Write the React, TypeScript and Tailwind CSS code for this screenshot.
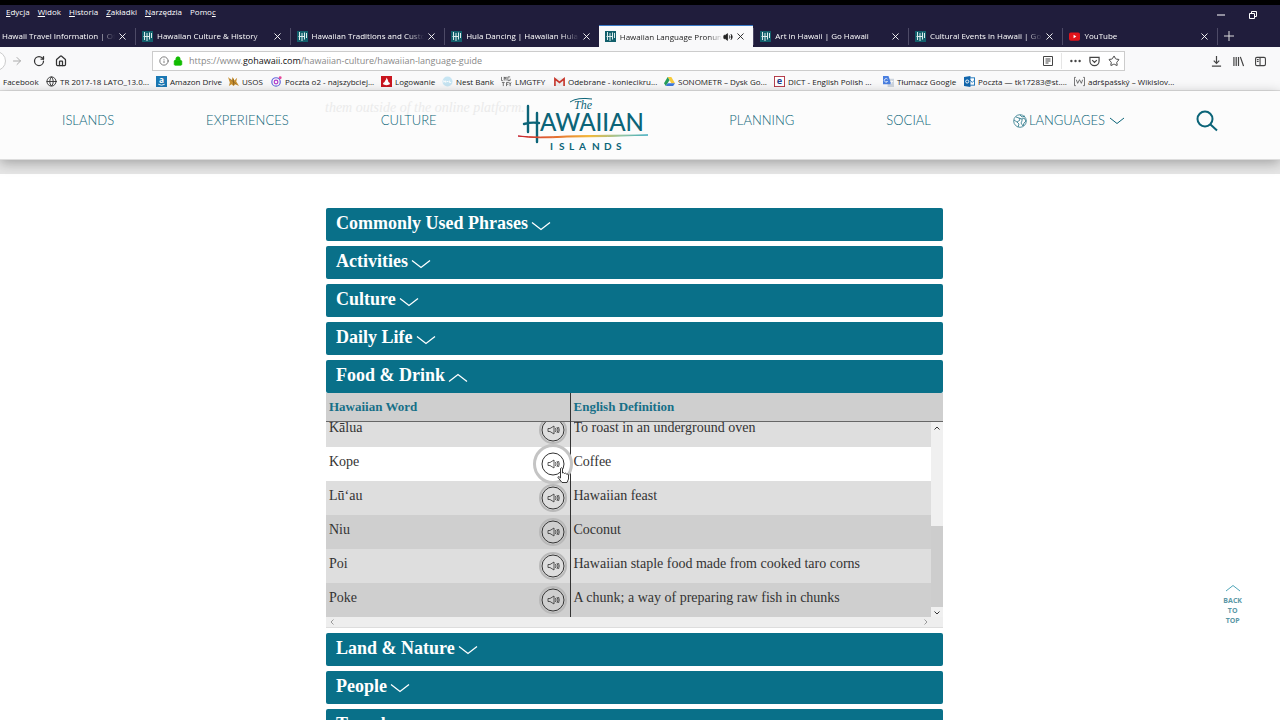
import type { ReactNode } from 'react'
import { ArrowRight, Globe, House, Info, Lock, RotateCw, Star, Volume2, X } from 'lucide-react'

interface Tab {
  title: string
  active?: boolean
  youtube?: boolean
}

interface Bookmark {
  label: string
  width: string
  icon?: ReactNode
}

interface Word {
  word: string
  definition: string
  hovered?: boolean
  cut?: boolean
}

const MENU = ['Edycja', 'Widok', 'Historia', 'Zakładki', 'Narzędzia']

const TABS: Tab[] = [
  { title: 'Hawaiian Culture & History' },
  { title: 'Hawaiian Traditions and Custo' },
  { title: 'Hula Dancing | Hawaiian Hula |' },
  { title: 'Hawaiian Language Pronun', active: true },
  { title: 'Art in Hawaii | Go Hawaii' },
  { title: 'Cultural Events in Hawaii | Go H' },
  { title: 'YouTube', youtube: true },
]

const svg = (children: ReactNode) => (
  <svg viewBox="0 0 12 12" className="size-[11px] shrink-0" aria-hidden="true">
    {children}
  </svg>
)

const BOOKMARKS: Bookmark[] = [
  { label: 'Facebook', width: 'w-[43px]' },
  { label: 'TR 2017-18 LATO_13.0...', width: 'w-[110px]', icon: <Globe className="size-[11px] shrink-0 text-[#333]" /> },
  {
    label: 'Amazon Drive',
    width: 'w-[72px]',
    icon: svg(
      <>
        <rect width="12" height="12" fill="#1a78b4" />
        <text x="6" y="8" fontSize="9" fontWeight="700" textAnchor="middle" fill="#fff">a</text>
        <path d="M2.5 9Q6 11 9.5 9" stroke="#fff" fill="none" />
      </>,
    ),
  },
  {
    label: 'USOS',
    width: 'w-[43px]',
    icon: svg(
      <>
        <path d="M0 1l4 4 1-4 2 4 3-3-1 4 3 5-4-2-2 2-2-2-3 2 1-4z" fill="#c98f2e" />
        <path d="M2 3l7 6M6 3v7" stroke="#7d5a22" strokeWidth=".7" />
      </>,
    ),
  },
  {
    label: 'Poczta o2 - najszybciej...',
    width: 'w-[110px]',
    icon: svg(
      <>
        <circle cx="5.5" cy="6.5" r="4.6" fill="none" stroke="#6667dd" strokeWidth="1.3" />
        <circle cx="5.5" cy="6.5" r="2" fill="none" stroke="#b33ccd" strokeWidth="1.3" />
        <circle cx="10" cy="2" r="1.6" fill="#e6469b" />
      </>,
    ),
  },
  {
    label: 'Logowanie',
    width: 'w-[61px]',
    icon: svg(
      <>
        <rect width="12" height="12" fill="#c9151e" />
        <path d="M6 1.5C7.5 4 8 5 8 6.5c3 1 2 3.500-2 3.500S1 7.500 4 6.500C4 5 6 4 6 1.500z" fill="#fff" />
      </>,
    ),
  },
  {
    label: 'Nest Bank',
    width: 'w-[59px]',
    icon: svg(
      <>
        <circle cx="6" cy="6" r="5.500" fill="#c7e5f3" />
        <path d="M2 7V5l2 2V5M5 6h2M8 5v2h2" stroke="#fff" fill="none" />
      </>,
    ),
  },
  {
    label: 'LMGTFY',
    width: 'w-[53px]',
    icon: svg(<path d="M.5 1v4h1.500M3.500 5V1l1 2 1-2v4M10 1H7.500v4H10V3M1 7h3M2.500 7v4M8.500 7H6v4M6 9h2M9 7l1 2 1-2M10 9v2" stroke="#666" fill="none" />),
  },
  {
    label: 'Odebrane - koniecikru...',
    width: 'w-[110px]',
    icon: svg(
      <>
        <rect y="2" width="12" height="9" fill="#eee" />
        <path d="M1 11V3l5 4 5-4v8" stroke="#c8372d" strokeWidth="1.800" fill="none" />
      </>,
    ),
  },
  {
    label: 'SONOMETR – Dysk Go...',
    width: 'w-[110px]',
    icon: svg(
      <>
        <path d="M4 1h4l4 7H8z" fill="#f7cb3b" />
        <path d="M4 1l2 3.500L2 11 0 8z" fill="#269e5b" />
        <path d="M4 8h8l-2 3H2z" fill="#3f79dc" />
      </>,
    ),
  },
  {
    label: 'DICT - English Polish ...',
    width: 'w-[109px]',
    icon: svg(
      <>
        <rect x=".5" y=".5" width="11" height="11" fill="#fff" stroke="#b03040" />
        <text x="6" y="9" fontSize="10" fontWeight="700" textAnchor="middle" fill="#1e3f8f">e</text>
      </>,
    ),
  },
  {
    label: 'Tłumacz Google',
    width: 'w-[81px]',
    icon: svg(
      <>
        <rect x="5" y="3" width="7" height="9" fill="#cfd6df" />
        <path d="M0 0h6l3 9H0z" fill="#4a7fe0" />
        <path d="M5 3.500A2 2 0 1 0 5 6H3.500M8 6h3M9.500 5v1l-1 3" stroke="#fff" strokeWidth=".8" fill="none" />
      </>,
    ),
  },
  {
    label: 'Poczta — tk17283@st....',
    width: 'w-[110px]',
    icon: svg(
      <>
        <rect x="6" y="2" width="5.500" height="8" fill="#fff" stroke="#1873b9" />
        <path d="M6 4l3 3 3-3" stroke="#1873b9" fill="none" />
        <path d="M0 1l7-1v12l-7-1z" fill="#1266ad" />
        <circle cx="3.500" cy="6" r="1.700" fill="none" stroke="#fff" />
      </>,
    ),
  },
  {
    label: 'adršpašský – Wikislov...',
    width: 'w-[110px]',
    icon: svg(
      <path d="M2 1.500H.5v9H2M10 1.500h1.500v9H10M2.500 4l1.500 4 2-4 2 4 1.500-4" stroke="#444" strokeWidth=".8" fill="none" />,
    ),
  },
]

const WORDS: Word[] = [
  { word: 'Kālua', definition: 'To roast in an underground oven', cut: true },
  { word: 'Kope', definition: 'Coffee', hovered: true },
  { word: 'Lūʻau', definition: 'Hawaiian feast' },
  { word: 'Niu', definition: 'Coconut' },
  { word: 'Poi', definition: 'Hawaiian staple food made from cooked taro corns' },
  { word: 'Poke', definition: 'A chunk; a way of preparing raw fish in chunks' },
]

function SiteIcon() {
  return (
    <svg viewBox="0 0 11 11" className="size-[11px] shrink-0" aria-hidden="true">
      <rect width="11" height="11" fill="#125f6b" />
      <path d="M2.500 1v8M5 2v8M1.500 5.500h6M7.500 1.500v7M9.500 2v5" stroke="#dcecec" fill="none" />
    </svg>
  )
}

function BrowserTab({ title, active, youtube }: Tab) {
  return (
    <div
      className={
        active
          ? 'flex min-w-0 flex-1 items-center border-t border-[#3a7bc8] bg-[#f9f9fa] pr-[7px] pl-[6px] text-[#222]'
          : 'flex min-w-0 flex-1 items-center pr-[7px] pl-[6px] text-white'
      }
    >
      {!active && <span className="mr-[6px] -ml-[6px] h-[17px] w-px bg-[#4d4a66]" />}
      {youtube ? (
        <svg viewBox="0 0 12 9" className="h-[9px] w-[11px] shrink-0" aria-hidden="true">
          <rect width="12" height="9" rx="2" fill="#e2131a" />
          <path d="M5 2.500v4l3-2z" fill="#fff" />
        </svg>
      ) : (
        <SiteIcon />
      )}
      <button className="ml-1 min-w-0 flex-1 overflow-hidden mask-r-from-85% text-left whitespace-nowrap">{title}</button>
      {active && <Volume2 className="size-[10px] shrink-0 fill-current" />}
      <button aria-label="Close tab" className="ml-[2px] shrink-0">
        <X className="size-[11px]" />
      </button>
    </div>
  )
}

function Browser() {
  return (
    <div className="font-['Open_Sans','Noto_Sans',sans-serif] text-[8px]">
      <div className="border-t-[5px] border-black bg-[#201d3c] text-white">
        <div className="flex h-5 items-start justify-between pr-[23px] pl-[6px]">
          <div className="flex gap-[8px] leading-[14px]">
            {MENU.map((m) => (
              <button key={m}>
                <u>{m[0]}</u>
                {m.slice(1)}
              </button>
            ))}
            <button>
              Pomo<u>c</u>
            </button>
          </div>
          <div className="flex gap-6 pt-[6px]">
            <button aria-label="Minimize">
              <svg viewBox="0 0 8 8" className="size-2"><path d="M0 4h8" stroke="#fff" /></svg>
            </button>
            <button aria-label="Restore">
              <svg viewBox="0 0 8 8" className="size-2"><path d="M.5 2.500h5v5h-5zM2.500 2V.5h5v5H6" stroke="#fff" fill="none" /></svg>
            </button>
          </div>
        </div>
        <div className="flex h-[22px]">
          <div className="flex w-[135px] shrink-0 items-center pr-[7px] pl-[2px]">
            <button className="min-w-0 flex-1 overflow-hidden mask-r-from-85% text-left whitespace-nowrap">
              Hawaii Travel Information | Off
            </button>
            <button aria-label="Close tab" className="ml-[2px]">
              <X className="size-[11px]" />
            </button>
          </div>
          {TABS.map((t) => (
            <BrowserTab key={t.title} {...t} />
          ))}
          <div className="flex w-[63px] shrink-0 items-center">
            <span className="mr-[6px] h-[17px] w-px bg-[#4d4a66]" />
            <button aria-label="New tab">
              <svg viewBox="0 0 10 10" className="size-[10px]"><path d="M5 0v10M0 5h10" stroke="#ddd" /></svg>
            </button>
          </div>
        </div>
      </div>

      <div className="flex h-7 items-center bg-[#f9f9fa] pr-[14px] text-[#444]">
        <div className="-ml-[14px] size-5 shrink-0 rounded-full border border-[#ccc] bg-white" />
        <div className="flex w-[146px] shrink-0 items-center gap-[10px] pl-[5px]">
          <button aria-label="Forward"><ArrowRight className="size-3 text-[#aaa]" /></button>
          <button aria-label="Reload"><RotateCw className="size-3 stroke-[2.5] text-[#333]" /></button>
          <button aria-label="Home"><House className="size-3 stroke-[2.5] text-[#333]" /></button>
        </div>
        <div className="flex h-5 flex-1 items-center border border-[#ccc] bg-white pr-1 pl-[6px]">
          <Info className="size-[10px] text-[#666]" />
          <Lock className="mx-1 size-[10px] fill-[#12bc00] text-[#12bc00]" />
          <div className="flex-1 pl-[2px] text-[9px] text-[#888]" role="textbox" aria-label="Address">
            https://www.<span className="text-[#111]">gohawaii.com</span>/hawaiian-culture/hawaiian-language-guide
          </div>
          <button aria-label="Reader view">
            <svg viewBox="0 0 10 10" className="size-[10px]"><path d="M.5.500h9v9h-9zM2.500 3h5M2.500 5h5M2.500 7h3" stroke="#444" fill="none" /></svg>
          </button>
          <span className="mx-2 h-4 w-px bg-[#e5e5e5]" />
          <div className="flex items-center gap-2">
            <button aria-label="Page actions">
              <svg viewBox="0 0 12 12" className="h-3 w-[11px]" fill="#444"><circle cx="1.500" cy="6" r="1.300" /><circle cx="6" cy="6" r="1.300" /><circle cx="10.500" cy="6" r="1.300" /></svg>
            </button>
            <button aria-label="Pocket">
              <svg viewBox="0 0 12 12" className="size-[11px]" fill="none" stroke="#444" strokeWidth="1.300"><path d="M1 1.500h10v4a5 5 0 0 1-10 0zM3.500 4.500L6 7l2.500-2.500" /></svg>
            </button>
            <button aria-label="Bookmark"><Star className="size-3" /></button>
          </div>
        </div>
        <div className="flex gap-[11px] pl-[86px]">
          <button aria-label="Downloads">
            <svg viewBox="0 0 12 12" className="size-[11px]" fill="none" stroke="#444" strokeWidth="1.300"><path d="M6 0v8M3 5l3 3 3-3M1 11h10" /></svg>
          </button>
          <button aria-label="Library">
            <svg viewBox="0 0 12 12" className="size-[11px]" fill="none" stroke="#444" strokeWidth="1.300"><path d="M1 1v10M3.500 1v10M6 1v10M8 1l3.500 10" /></svg>
          </button>
          <button aria-label="Sidebar">
            <svg viewBox="0 0 12 12" className="size-[11px]" fill="none" stroke="#444" strokeWidth="1.200"><rect x=".6" y="1.500" width="10.800" height="9" rx="1.500" /><path d="M5.500 1.500v9M2 4h2M2 6h2" /></svg>
          </button>
        </div>
      </div>

      <div className="flex h-4 items-center overflow-hidden border-b border-[#e0e0e0] bg-[#f9f9fa] pb-[2px] pl-[3px] text-[#222]">
        {BOOKMARKS.map((b) => (
          <a key={b.label} href="#" className={`flex shrink-0 items-center gap-[3px] whitespace-nowrap ${b.width}`}>
            {b.icon}
            {b.label}
          </a>
        ))}
      </div>
    </div>
  )
}

function Logo() {
  return (
    <svg viewBox="0 0 132 56" className="h-14 w-[132px]" fill="#0b6478" role="img" aria-label="The Hawaiian Islands">
      <defs>
        <linearGradient id="swoosh">
          <stop offset="0" stopColor="#c4202e" />
          <stop offset=".25" stopColor="#e2622b" />
          <stop offset=".55" stopColor="#f2b632" />
          <stop offset=".8" stopColor="#8fc3a0" />
          <stop offset="1" stopColor="#3aa9bd" />
        </linearGradient>
      </defs>
      <text x="57" y="12" fontSize="12" fontStyle="italic" fontFamily="Liberation Serif, serif">The</text>
      <path d="M53 5Q60 0 75 2" stroke="#0b6478" fill="none" />
      <path d="M11 9v26M20 16v29M7 27q7-2 15-1" stroke="#0b6478" strokeWidth="2.400" strokeLinecap="round" fill="none" />
      <text x="23" y="34" fontSize="24" fontWeight="500" fontFamily="Lato, sans-serif">AWAIIAN</text>
      <path
        d="M1 39q20 2 49 0q42-1 81-1q-40 2-81 2q-30 2-49-1z"
        fill="url(#swoosh)"
        stroke="url(#swoosh)"
      />
      <text x="33 42 52 62 75 87 99" y="53" fontSize="10" fontWeight="700" fontFamily="Lato, sans-serif">ISLANDS</text>
    </svg>
  )
}

function Chevron({ up }: { up?: boolean }) {
  return (
    <svg viewBox="0 0 20 10" className="mt-1 h-[10px] w-5" fill="none" stroke="currentColor" strokeWidth="1.300" aria-hidden="true">
      <path d={up ? 'M1 8.500l9-7 9 7' : 'M1 1.500l9 7 9-7'} />
    </svg>
  )
}

function SiteHeader() {
  return (
    <header className="relative flex h-[69px] items-center justify-between border-b border-[#ddd] bg-[#fcfcfc] px-[62px] pb-2 font-['Lato',sans-serif] text-[13px] font-light text-[#0b6478] shadow-[0_3px_12px_rgba(0,0,0,0.3)]">
      <p className="absolute top-[6px] left-[325px] font-['Liberation_Serif',serif] text-[14px] font-normal text-[#ebebeb] italic">
        them outside of the online platform.
      </p>
      <nav className="relative flex gap-[92px]">
        <a href="#">ISLANDS</a>
        <a href="#">EXPERIENCES</a>
        <a href="#">CULTURE</a>
      </nav>
      <a href="#" className="relative mt-2">
        <Logo />
      </a>
      <nav className="flex items-center">
        <a href="#">PLANNING</a>
        <a href="#" className="ml-[92px]">SOCIAL</a>
        <button className="ml-[82px] flex items-center">
          <svg viewBox="0 0 14 14" className="mr-[2px] size-[14px]" fill="none" stroke="currentColor" strokeWidth=".7" aria-hidden="true">
            <circle cx="7" cy="7" r="6.300" />
            <path d="M3 3l3 1 1 2-3 2-3-2M4 8l2 2-1 3M7 1l2 2 3-1M9 5l2-1 2 3-2 2-1 3-2-3 1-2zM6 4l3 1" />
          </svg>
          LANGUAGES
          <svg viewBox="0 0 16 8" className="ml-1 h-2 w-4" fill="none" stroke="currentColor" aria-hidden="true"><path d="M1 1l7 5.500L15 1" /></svg>
        </button>
        <button aria-label="Search" className="ml-[71px]">
          <svg viewBox="0 0 22 22" className="size-[22px]" fill="none" stroke="#0b6478" strokeWidth="2"><circle cx="9" cy="9" r="7.500" /><path d="M14.500 14.500l6.500 6" /></svg>
        </button>
      </nav>
    </header>
  )
}

function Section({ title, open, children }: { title: string; open?: boolean; children?: ReactNode }) {
  return (
    <section className="mb-[5px]">
      <button
        aria-expanded={!!open}
        className="flex h-[33px] w-full items-center gap-[3px] rounded-xs bg-[#097089] px-[10px] pb-[2px] text-[18px] font-bold text-white"
      >
        {title}
        <Chevron up={open} />
      </button>
      {children}
    </section>
  )
}

function PlayButton({ word, hovered }: { word: string; hovered?: boolean }) {
  return (
    <button
      aria-label={`Play ${word}`}
      className={
        hovered
          ? 'relative flex size-[28px] items-center justify-center rounded-full outline-[3px] outline-offset-[3px] outline-[#c4c4c4]'
          : 'relative flex size-[28px] items-center justify-center rounded-full border-2 border-[#b9b9b9]'
      }
    >
      <svg viewBox="0 0 24 24" className="size-6 shrink-0" fill="none" stroke="#333" aria-hidden="true">
        <circle cx="12" cy="12" r="11" />
        <path d="M7 10.500h2l4-2.500v8l-4-2.500H7zM14.500 10q1 2 0 4M16 9q2 3 0 6M17.500 9q1.500 3 0 6" strokeWidth=".8" />
      </svg>
      {hovered && (
        <svg viewBox="0 0 12 16" className="absolute top-[17px] left-[18px] h-4 w-3" fill="#fff" stroke="#222" strokeWidth=".9" aria-hidden="true">
          <path d="M3.500 9V1.500q1-1.500 2 0V6q1-1 2 .5 1-1 2 .5 1.500-.5 2 1v4l-1.500 3.500H5L1 10.500q0-2 2.500.500z" />
        </svg>
      )}
    </button>
  )
}

function WordTable() {
  return (
    <div className="border-b border-[#ddd] bg-[#eee] text-[#333]">
      <div className="relative">
        <table className="w-full table-fixed border-collapse text-[14px]">
          <thead className="bg-[#cfcfcf] text-left text-[13px] text-[#176f88]">
            <tr className="h-7 border-b border-[#666]">
              <th className="w-[244px] border-r border-[#333] px-[3px]">Hawaiian Word</th>
              <th className="px-[3px]">English Definition</th>
            </tr>
          </thead>
          <tbody>
            {WORDS.map((w, i) => (
              <tr key={w.word} className={w.hovered ? 'bg-white' : i % 2 ? 'bg-[#cfcfcf]' : 'bg-[#dedede]'}>
                <td className="border-r border-[#333] p-0 px-[3px]">
                  <div className={w.cut ? 'flex h-[25px] items-end overflow-hidden' : 'flex h-[34px] items-end'}>
                    <div className="flex h-[34px] flex-1 items-center justify-between">
                      <span className="h-[34px] leading-[30px]">{w.word}</span>
                      <PlayButton word={w.word} hovered={w.hovered} />
                    </div>
                  </div>
                </td>
                <td className="p-0 px-[3px]">
                  <div className={w.cut ? 'flex h-[25px] items-end overflow-hidden' : 'flex h-[34px] items-end'}>
                    <span className="h-[34px] leading-[30px] whitespace-nowrap">{w.definition}</span>
                  </div>
                </td>
              </tr>
            ))}
          </tbody>
        </table>
        <div className="absolute top-[29px] right-0 bottom-0 flex w-3 flex-col items-center justify-between bg-[#f0f0f0] pt-1 pb-[2px]">
          <svg viewBox="0 0 6 4" className="h-1 w-[6px]" fill="none" stroke="#333"><path d="M.5 3.500L3 1l2.500 2.500" /></svg>
          <div className="mt-auto mb-1 h-[81px] w-full bg-[#cdcdcd]" />
          <svg viewBox="0 0 6 4" className="h-1 w-[6px]" fill="none" stroke="#333"><path d="M.5.500L3 3 5.500.500" /></svg>
        </div>
      </div>
      <div className="flex h-[10px] items-center justify-between pr-[15px] pl-1">
        <svg viewBox="0 0 4 6" className="h-[6px] w-1" fill="none" stroke="#999"><path d="M3.500.500L1 3l2.500 2.500" /></svg>
        <svg viewBox="0 0 4 6" className="h-[6px] w-1" fill="none" stroke="#999"><path d="M.5.500L3 3 .5 5.500" /></svg>
      </div>
    </div>
  )
}

export default function App() {
  return (
    <div className="flex h-screen flex-col overflow-hidden bg-white">
      <Browser />
      <SiteHeader />
      <div className="h-[14px] shrink-0 bg-[#e6e6e6]" />
      <main className="relative min-h-0 flex-1 overflow-hidden pt-[34px] pr-[11px] font-['Liberation_Serif',serif]">
        <div className="mx-auto max-w-[617px]">
          <Section title="Commonly Used Phrases" />
          <Section title="Activities" />
          <Section title="Culture" />
          <Section title="Daily Life" />
          <Section title="Food & Drink" open>
            <WordTable />
          </Section>
          <Section title="Land & Nature" />
          <Section title="People" />
          <Section title="Travel" />
        </div>
        <a
          href="#"
          className="absolute right-[38px] bottom-[94px] flex flex-col items-center text-center font-['Open_Sans',sans-serif] text-[7px] leading-[10px] font-bold text-[#5b98a6]"
        >
          <svg viewBox="0 0 16 8" className="mb-1 h-2 w-4" fill="none" stroke="#4ea5b8" aria-hidden="true"><path d="M1 7l7-5.500L15 7" /></svg>
          <span>BACK</span>
          <span>TO</span>
          <span>TOP</span>
        </a>
      </main>
    </div>
  )
}
